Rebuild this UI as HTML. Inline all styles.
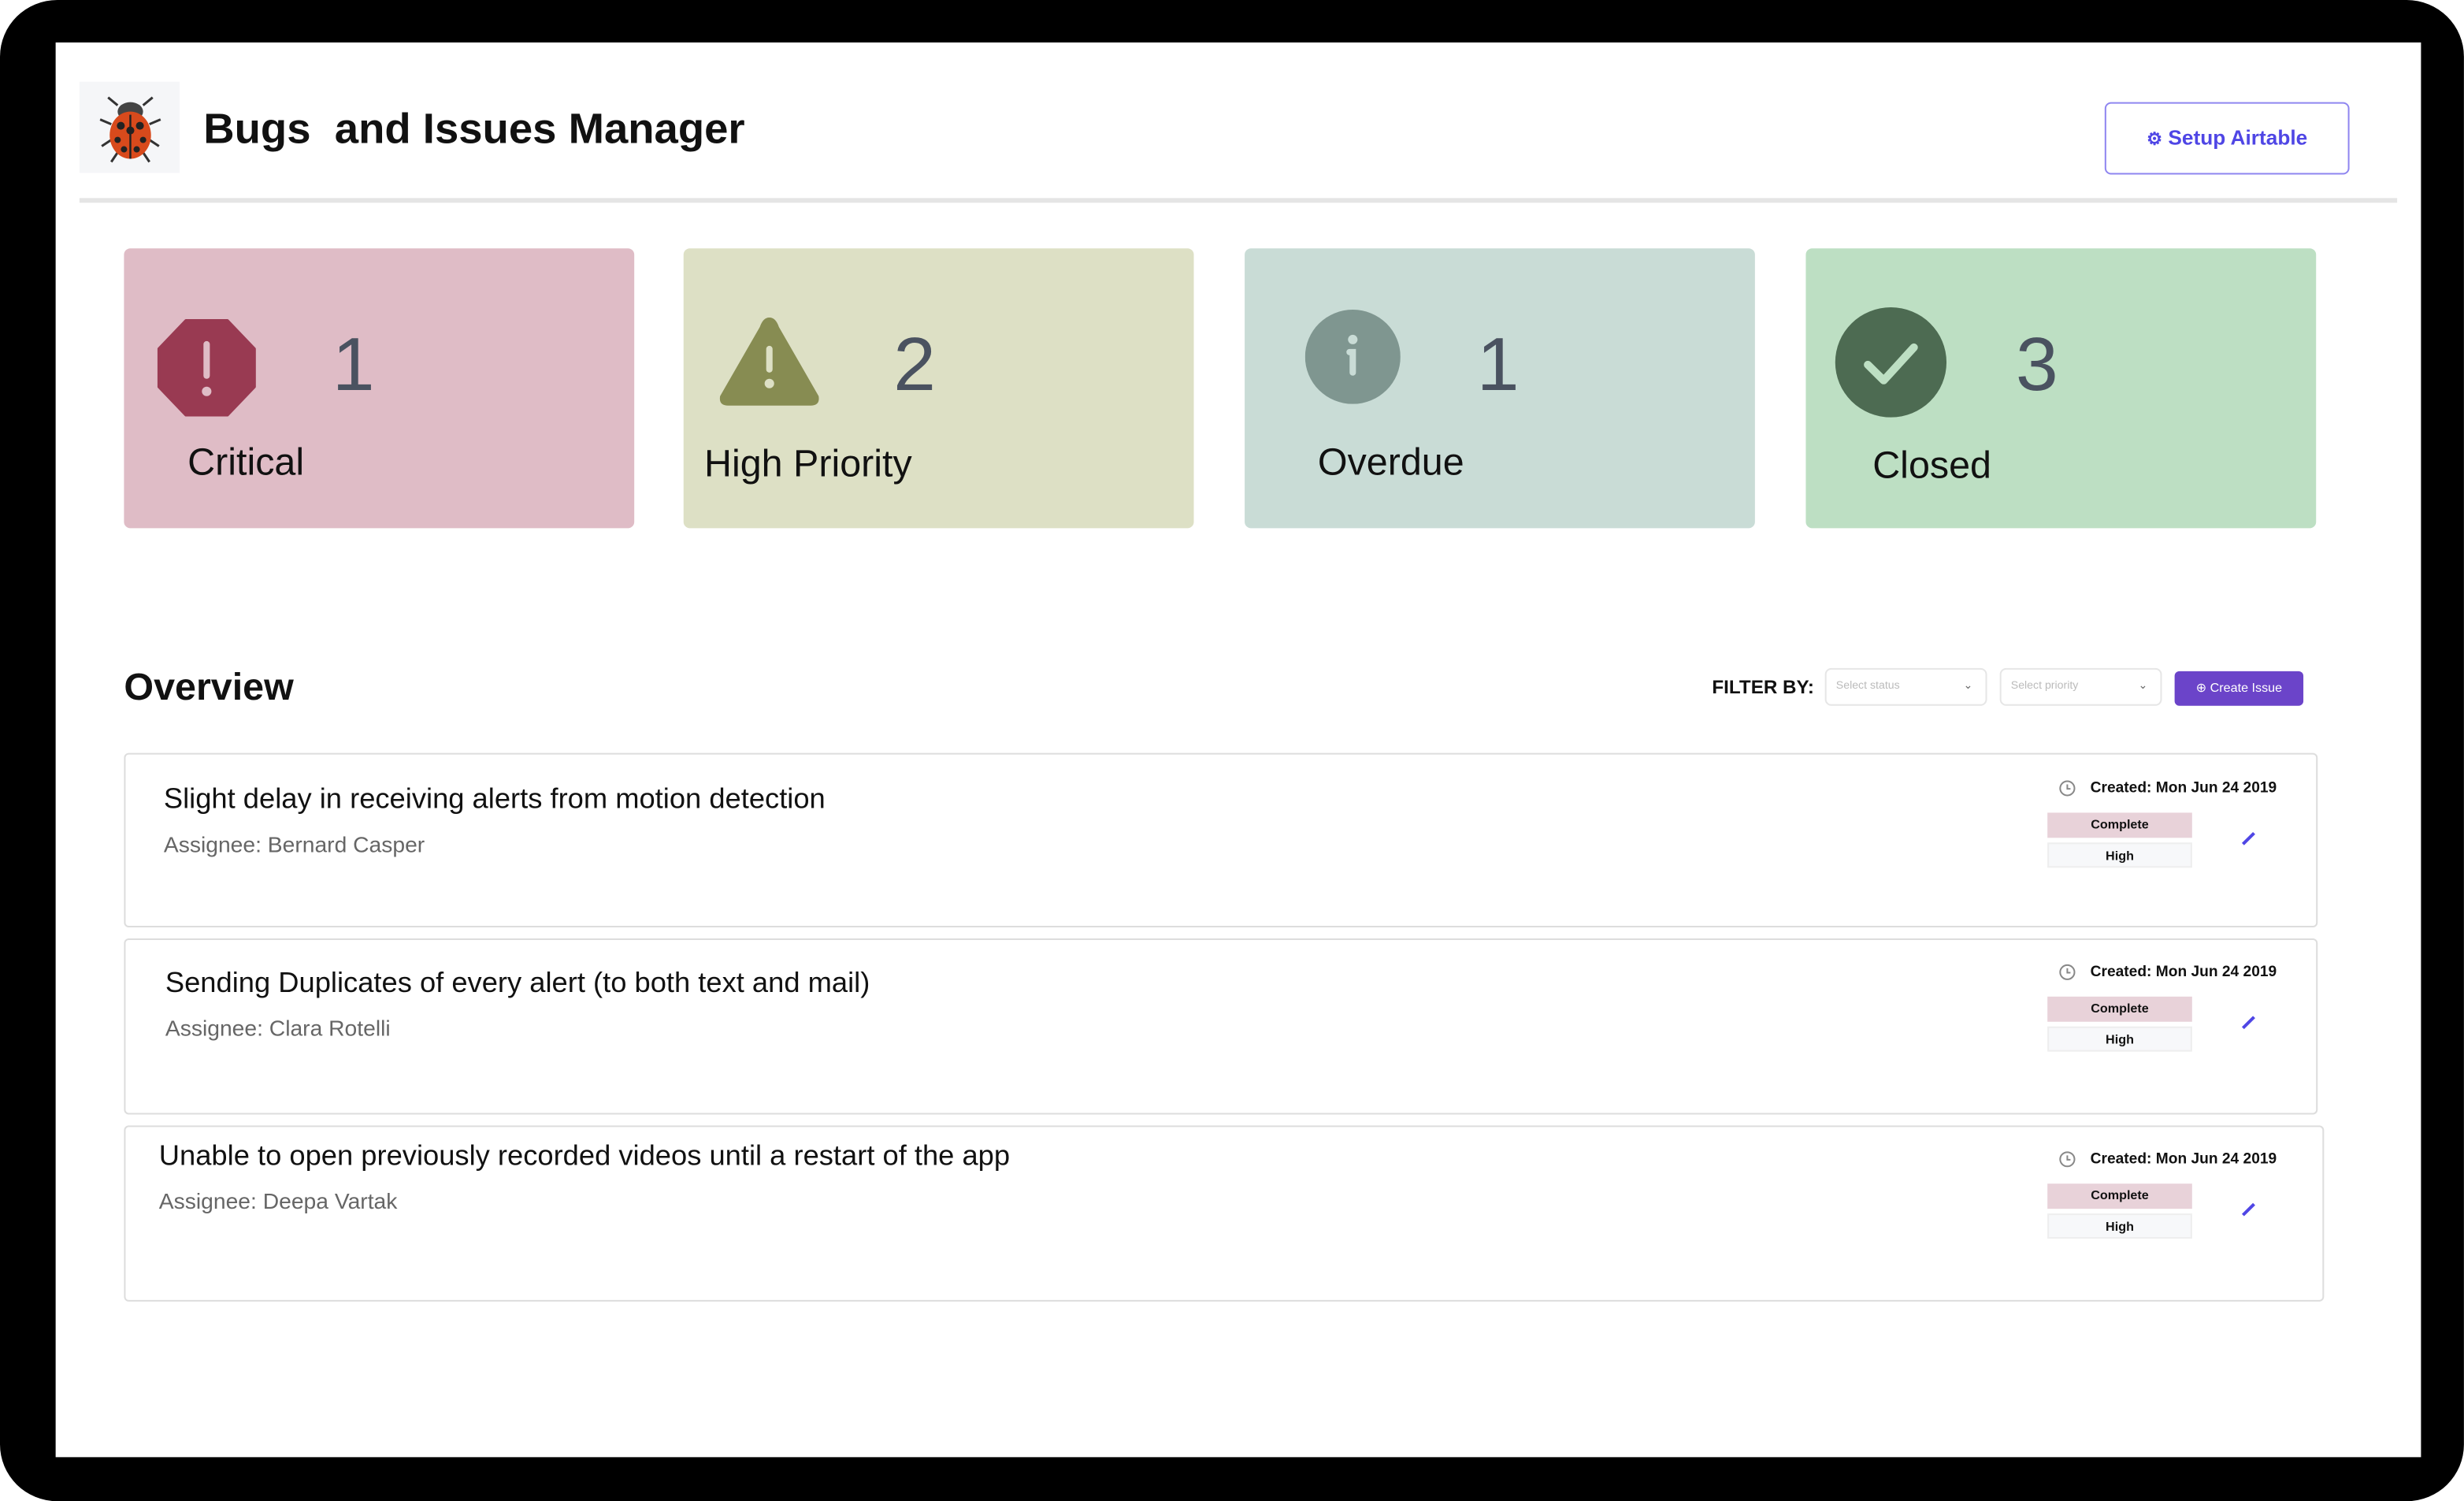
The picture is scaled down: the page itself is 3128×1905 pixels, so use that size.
<!DOCTYPE html>
<html><head><meta charset="utf-8"><style>
html,body{margin:0;padding:0;width:3128px;height:1905px;overflow:hidden;background:#fff;}
#s{position:absolute;left:0;top:0;width:1550px;height:955px;transform:scale(2.018,1.995);transform-origin:0 0;font-family:"Liberation Sans",sans-serif;color:#111;}
.a{position:absolute}
#f{left:0;top:0;width:1550px;height:955px;background:#000;border-radius:36px}
#w{left:35px;top:27px;width:1488px;height:900px;background:#fff}
.card{position:absolute;top:158px;width:321px;height:178px;border-radius:4px}
.num{position:absolute;font-size:48px;color:#4a5260;top:203px;line-height:60px}
.lab{position:absolute;font-size:24px;top:280px;line-height:30px;color:#111}
.row{position:absolute;left:78px;border:1px solid #ddd;border-radius:3px;background:#fff}
.t{position:absolute;font-size:18px;line-height:22px;color:#111;white-space:nowrap}
.as{position:absolute;font-size:14px;color:#666;line-height:18px}
.cr{position:absolute;font-size:9.5px;font-weight:bold;line-height:12px;white-space:nowrap}
.bd{position:absolute;width:91px;height:16px;font-size:8px;font-weight:bold;text-align:center;line-height:16px}
.c{background:#e8d2d9}.h{background:#f7f8fa;border:1px solid #eee;box-sizing:border-box}
.sel{position:absolute;top:425px;width:102px;height:24px;border:1px solid #e6e6e6;border-radius:4px;box-sizing:border-box;font-size:7px;color:#bbb;line-height:22px;padding-left:6px}
</style></head><body><div id="s">
<div class="a" id="f"></div>
<div class="a" id="w"></div>
<div class="a" style="left:50px;top:52px;width:63px;height:58px;background:#f5f6f8"></div>
<svg class="a" style="left:60px;top:59px" width="44" height="46" viewBox="0 0 44 46">
<g stroke="#333" stroke-width="1.5" fill="none"><path d="M14 8 L8 3 M30 8 L36 3 M10 20 L3 17 M34 20 L41 17 M10 30 L4 34 M34 30 L40 34 M14 38 L10 44 M30 38 L34 44"/></g>
<ellipse cx="22" cy="12" rx="8" ry="6" fill="#444"/>
<ellipse cx="22" cy="27" rx="13" ry="15" fill="#d84a1c"/>
<line x1="22" y1="14" x2="22" y2="42" stroke="#222" stroke-width="1.2"/>
<g fill="#222"><circle cx="16" cy="21" r="2.5"/><circle cx="28" cy="21" r="2.5"/><circle cx="22" cy="24" r="2.5"/><circle cx="14" cy="30" r="2"/><circle cx="30" cy="30" r="2"/><circle cx="18" cy="36" r="2"/><circle cx="26" cy="36" r="2"/></g></svg>
<div class="a" style="left:128px;top:65px;font-size:27px;font-weight:bold;line-height:34px;white-space:pre">Bugs  and Issues Manager</div>
<div class="a" style="left:1324px;top:65px;width:154px;height:46px;border:1px solid #8f86f0;border-radius:4px;box-sizing:border-box;color:#4f46e5;font-size:13px;font-weight:bold;line-height:44px;text-align:center"><span style="font-size:11px">⚙</span> Setup Airtable</div>
<div class="a" style="left:50px;top:126px;width:1458px;height:3px;background:#e5e5e5"></div>

<div class="card" style="left:78px;background:#dfbcc6"></div>
<div class="card" style="left:430px;background:#dde0c5"></div>
<div class="card" style="left:783px;background:#c9dcd6"></div>
<div class="card" style="left:1136px;background:#bddfc3"></div>
<svg class="a" style="left:99px;top:203px" width="62" height="62" viewBox="0 0 62 62"><polygon points="18,1 44,1 61,19 61,43 44,61 18,61 1,43 1,19" fill="#993a52" stroke="#993a52" stroke-width="2" stroke-linejoin="round"/><rect x="29" y="14" width="4" height="24" rx="2" fill="#dfbcc6"/><circle cx="31" cy="46" r="3" fill="#dfbcc6"/></svg>
<svg class="a" style="left:451px;top:200px" width="66" height="60" viewBox="0 0 66 60"><path d="M33 2 Q37 2 39 8 L64 52 Q65 58 59 58 L7 58 Q1 58 2 52 L27 8 Q29 2 33 2Z" fill="#878c52"/><rect x="31" y="20" width="4" height="17" rx="2" fill="#dde0c5"/><circle cx="33" cy="44" r="3" fill="#dde0c5"/></svg>
<svg class="a" style="left:821px;top:197px" width="60" height="60" viewBox="0 0 60 60"><circle cx="30" cy="30" r="30" fill="#7f9690"/><circle cx="30" cy="19" r="3" fill="#c9dcd6"/><path d="M28 27 L30 27 L30 40" stroke="#c9dcd6" stroke-width="4" fill="none" stroke-linecap="round"/></svg>
<svg class="a" style="left:1154px;top:195px" width="71" height="71" viewBox="0 0 71 71"><circle cx="35.5" cy="35.5" r="35" fill="#4d6b52"/><path d="M21 37 L31 47 L50 26" stroke="#bddfc3" stroke-width="5" fill="none" stroke-linecap="round" stroke-linejoin="round"/></svg>
<div class="num" style="left:209px">1</div>
<div class="num" style="left:562px">2</div>
<div class="num" style="left:929px">1</div>
<div class="num" style="left:1268px">3</div>
<div class="lab" style="left:118px">Critical</div>
<div class="lab" style="left:443px;top:281px">High Priority</div>
<div class="lab" style="left:829px">Overdue</div>
<div class="lab" style="left:1178px;top:282px">Closed</div>

<div class="a" style="left:78px;top:424px;font-size:24px;font-weight:bold;line-height:28px">Overview</div>
<div class="a" style="left:1077px;top:430px;font-size:12px;font-weight:bold;line-height:14px">FILTER BY:</div>
<div class="sel" style="left:1148px">Select status<span style="position:absolute;right:8px;color:#666">⌄</span></div>
<div class="sel" style="left:1258px">Select priority<span style="position:absolute;right:8px;color:#666">⌄</span></div>
<div class="a" style="left:1368px;top:427px;width:81px;height:22px;background:#6b44c9;border-radius:3px;color:#fff;font-size:8px;line-height:22px;text-align:center">⊕ Create Issue</div>

<div class="row" style="top:479px;width:1378px;height:109px"></div>
<div class="row" style="top:597px;width:1378px;height:110px"></div>
<div class="row" style="top:716px;width:1382px;height:110px"></div>

<div class="t" style="left:103px;top:497px">Slight delay in receiving alerts from motion detection</div>
<div class="as" style="left:103px;top:528px">Assignee: Bernard Casper</div>
<div class="t" style="left:104px;top:614px">Sending Duplicates of every alert (to both text and mail)</div>
<div class="as" style="left:104px;top:645px">Assignee: Clara Rotelli</div>
<div class="t" style="left:100px;top:724px">Unable to open previously recorded videos until a restart of the app</div>
<div class="as" style="left:100px;top:755px">Assignee: Deepa Vartak</div>

<div class="a" style="left:0;top:0">
<svg class="a" style="left:1295px;top:496px" width="11" height="11" viewBox="0 0 11 11"><circle cx="5.5" cy="5.5" r="4.5" fill="none" stroke="#888"/><path d="M5.5 3 V5.8 H7.5" stroke="#888" fill="none"/></svg>
<div class="cr" style="left:1315px;top:496px">Created: Mon Jun 24 2019</div>
<div class="bd c" style="left:1288px;top:517px">Complete</div>
<div class="bd h" style="left:1288px;top:536px">High</div>
<svg class="a" style="left:1410px;top:528px" width="10" height="10"><path d="M1 9 L8 2" stroke="#4f46e5" stroke-width="2"/></svg>
</div>
<div class="a" style="left:0;top:117px">
<svg class="a" style="left:1295px;top:496px" width="11" height="11" viewBox="0 0 11 11"><circle cx="5.5" cy="5.5" r="4.5" fill="none" stroke="#888"/><path d="M5.5 3 V5.8 H7.5" stroke="#888" fill="none"/></svg>
<div class="cr" style="left:1315px;top:496px">Created: Mon Jun 24 2019</div>
<div class="bd c" style="left:1288px;top:517px">Complete</div>
<div class="bd h" style="left:1288px;top:536px">High</div>
<svg class="a" style="left:1410px;top:528px" width="10" height="10"><path d="M1 9 L8 2" stroke="#4f46e5" stroke-width="2"/></svg>
</div>
<div class="a" style="left:0;top:236px">
<svg class="a" style="left:1295px;top:496px" width="11" height="11" viewBox="0 0 11 11"><circle cx="5.5" cy="5.5" r="4.5" fill="none" stroke="#888"/><path d="M5.5 3 V5.8 H7.5" stroke="#888" fill="none"/></svg>
<div class="cr" style="left:1315px;top:496px">Created: Mon Jun 24 2019</div>
<div class="bd c" style="left:1288px;top:517px">Complete</div>
<div class="bd h" style="left:1288px;top:536px">High</div>
<svg class="a" style="left:1410px;top:528px" width="10" height="10"><path d="M1 9 L8 2" stroke="#4f46e5" stroke-width="2"/></svg>
</div>
</div></body></html>
